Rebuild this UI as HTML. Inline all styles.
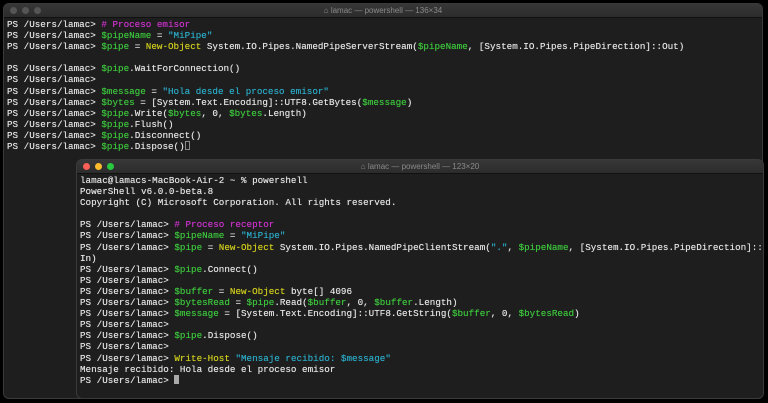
<!DOCTYPE html>
<html><head><meta charset="utf-8"><style>
html,body{margin:0;padding:0;width:768px;height:403px;background:#000;overflow:hidden}
.win{position:absolute;background:#1e1e1e;border-radius:5px;overflow:hidden;box-shadow:0 0 0 1px #3a3a3a}
.tb{height:13px;background:linear-gradient(#373737,#2c2c2c);border-bottom:1px solid #111;position:relative;font-family:"Liberation Sans",sans-serif;font-size:8px;color:#8a8a8a;text-align:center;line-height:13px}
.dot{position:absolute;top:3px;width:7px;height:7px;border-radius:50%}
pre{margin:0;font-family:"Liberation Mono",monospace;font-size:9.25px;line-height:11.1px;color:#e2e2e2;padding:0 3px;text-shadow:0 0 0.4px currentColor}
.g{color:#3cc43c}.y{color:#cfcc1c}.c{color:#2aa8c4}.m{color:#c832c8}
.cur{display:inline-block;width:5px;height:9px;vertical-align:-1px}
</style></head><body>
<div class="win" style="left:4px;top:4px;width:758px;height:394px">
<div class="tb"><span class="dot" style="left:6px;background:#555"></span><span class="dot" style="left:18px;background:#555"></span><span class="dot" style="left:30px;background:#555"></span>⌂ lamac — powershell — 136×34</div>
<pre style="margin-top:1px">PS /Users/lamac&gt; <span class="m"># Proceso emisor</span>
PS /Users/lamac&gt; <span class="g">$pipeName</span> = <span class="c">"MiPipe"</span>
PS /Users/lamac&gt; <span class="g">$pipe</span> = <span class="y">New-Object</span> System.IO.Pipes.NamedPipeServerStream(<span class="g">$pipeName</span>, [System.IO.Pipes.PipeDirection]::Out)

PS /Users/lamac&gt; <span class="g">$pipe</span>.WaitForConnection()
PS /Users/lamac&gt;
PS /Users/lamac&gt; <span class="g">$message</span> = <span class="c">"Hola desde el proceso emisor"</span>
PS /Users/lamac&gt; <span class="g">$bytes</span> = [System.Text.Encoding]::UTF8.GetBytes(<span class="g">$message</span>)
PS /Users/lamac&gt; <span class="g">$pipe</span>.Write(<span class="g">$bytes</span>, 0, <span class="g">$bytes</span>.Length)
PS /Users/lamac&gt; <span class="g">$pipe</span>.Flush()
PS /Users/lamac&gt; <span class="g">$pipe</span>.Disconnect()
PS /Users/lamac&gt; <span class="g">$pipe</span>.Dispose()<span class="cur" style="border:1px solid #888;box-sizing:border-box"></span></pre>
</div>
<div class="win" style="left:77px;top:160px;width:686px;height:238px">
<div class="tb"><span class="dot" style="left:6px;background:#fc5f57"></span><span class="dot" style="left:18px;background:#fdbc2e"></span><span class="dot" style="left:30px;background:#28c840"></span>⌂ lamac — powershell — 123×20</div>
<pre style="margin-top:1px">lamac@lamacs-MacBook-Air-2 ~ % powershell
PowerShell v6.0.0-beta.8
Copyright (C) Microsoft Corporation. All rights reserved.

PS /Users/lamac&gt; <span class="m"># Proceso receptor</span>
PS /Users/lamac&gt; <span class="g">$pipeName</span> = <span class="c">"MiPipe"</span>
PS /Users/lamac&gt; <span class="g">$pipe</span> = <span class="y">New-Object</span> System.IO.Pipes.NamedPipeClientStream(<span class="c">"."</span>, <span class="g">$pipeName</span>, [System.IO.Pipes.PipeDirection]::
In)
PS /Users/lamac&gt; <span class="g">$pipe</span>.Connect()
PS /Users/lamac&gt;
PS /Users/lamac&gt; <span class="g">$buffer</span> = <span class="y">New-Object</span> byte[] 4096
PS /Users/lamac&gt; <span class="g">$bytesRead</span> = <span class="g">$pipe</span>.Read(<span class="g">$buffer</span>, 0, <span class="g">$buffer</span>.Length)
PS /Users/lamac&gt; <span class="g">$message</span> = [System.Text.Encoding]::UTF8.GetString(<span class="g">$buffer</span>, 0, <span class="g">$bytesRead</span>)
PS /Users/lamac&gt;
PS /Users/lamac&gt; <span class="g">$pipe</span>.Dispose()
PS /Users/lamac&gt;
PS /Users/lamac&gt; <span class="y">Write-Host</span> <span class="c">"Mensaje recibido: $message"</span>
Mensaje recibido: Hola desde el proceso emisor
PS /Users/lamac&gt; <span class="cur" style="background:#aaa"></span></pre>
</div>
</body></html>
